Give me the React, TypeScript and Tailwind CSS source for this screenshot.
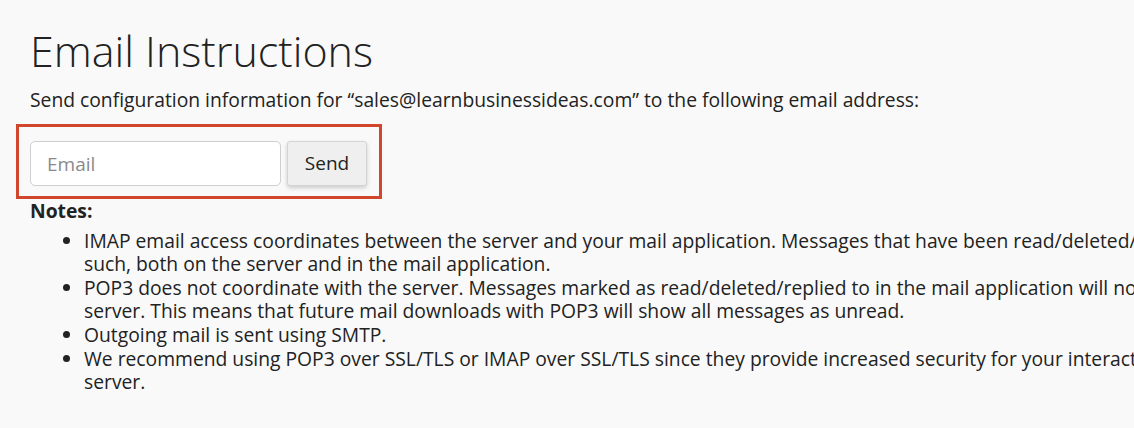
import { useState } from "react";

const notes = [
  [
    "IMAP email access coordinates between the server and your mail application. Messages that have been read/deleted/replied to will show up as",
    "such, both on the server and in the mail application.",
  ],
  [
    "POP3 does not coordinate with the server. Messages marked as read/deleted/replied to in the mail application will not show up as such on the",
    "server. This means that future mail downloads with POP3 will show all messages as unread.",
  ],
  ["Outgoing mail is sent using SMTP."],
  [
    "We recommend using POP3 over SSL/TLS or IMAP over SSL/TLS since they provide increased security for your interactions with the remote mail",
    "server.",
  ],
];

export default function App() {
  const [email, setEmail] = useState("");

  return (
    <div className="h-[428px] w-[1134px] overflow-hidden bg-[#f9f9f9] text-[#222] font-['Open_Sans',sans-serif]">
      <div className="px-[30px] pt-[25px]">
        <h1 className="text-[43px] font-light leading-[52px] text-[#222]">Email Instructions</h1>
        <p className="mt-[11px] whitespace-nowrap text-[19.3px] leading-[24px]">
          Send configuration information for “sales@learnbusinessideas.com” to the following email address:
        </p>

        <div className="-ml-[14px] mt-[12px] w-[366px] border-[3px] border-[#d0472e] px-[11px] pt-[14px] pb-[10px]">
          <div className="flex items-center gap-[6px]">
            <input
              type="email"
              value={email}
              onChange={(e) => setEmail(e.target.value)}
              placeholder="Email"
              className="h-[45px] w-[251px] rounded-[5px] border border-[#cfcfcf] bg-white px-[16px] text-[19px] text-[#333] outline-none placeholder:text-[#8a8a8a]"
            />
            <button className="h-[45px] w-[80px] rounded-[3px] border border-[#d4d4d4] bg-[#efefef] text-[19px] text-[#222] shadow-[0_2px_4px_rgba(0,0,0,0.18)]">
              Send
            </button>
          </div>
        </div>

        <div className="text-[19.3px] leading-[23.6px]">
          <p className="font-bold">Notes:</p>
          <ul className="mt-[6px] list-disc pl-[54px]">
            {notes.map((lines, i) => (
              <li key={i} className="whitespace-nowrap">
                {lines.map((line, j) => (
                  <span key={j}>
                    {j > 0 && <br />}
                    {line}
                  </span>
                ))}
              </li>
            ))}
          </ul>
        </div>
      </div>
    </div>
  );
}
